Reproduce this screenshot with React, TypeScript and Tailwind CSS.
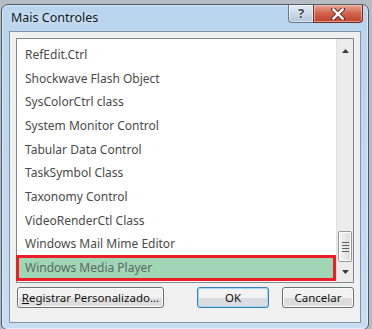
import React from 'react'

const ITEMS = [
  'RefEdit.Ctrl',
  'Shockwave Flash Object',
  'SysColorCtrl class',
  'System Monitor Control',
  'Tabular Data Control',
  'TaskSymbol Class',
  'Taxonomy Control',
  'VideoRenderCtl Class',
  'Windows Mail Mime Editor',
  'Windows Media Player',
]

const SELECTED = 'Windows Media Player'

function CaptionButtons() {
  return (
    <div className="flex h-[18px]">
      {/* help */}
      <div className="flex w-[25px] items-center justify-center rounded-bl-[4px] border border-t-0 border-r-0 border-[#6b7888] bg-gradient-to-b from-[#e3ebf4] via-[#cbd8e6] to-[#b4c5d8] shadow-[inset_0_0_0_1px_rgba(255,255,255,0.55)]">
        <span className="text-[13px] font-bold leading-none text-[#3d4550] [text-shadow:0_0_2px_#ffffff,0_0_1px_#ffffff]">
          ?
        </span>
      </div>
      {/* close */}
      <div className="flex w-[50px] items-center justify-center rounded-br-[4px] border border-t-0 border-[#6a2f27] bg-gradient-to-b from-[#e9a797] via-[#d0604a] to-[#c2432c] shadow-[inset_0_0_0_1px_rgba(255,210,200,0.55)]">
        <svg width="14" height="12" viewBox="0 0 14 12">
          <path d="M2 1 L12 11 M12 1 L2 11" stroke="#5a2a22" strokeWidth="4.2" strokeLinecap="round" />
          <path d="M2.3 1.3 L11.7 10.7 M11.7 1.3 L2.3 10.7" stroke="#ffffff" strokeWidth="2.4" strokeLinecap="round" />
        </svg>
      </div>
    </div>
  )
}

function Scrollbar() {
  return (
    <div className="flex w-[17px] flex-col border-l border-[#e2e2e2] bg-[#ececec]">
      <div className="flex h-[23px] items-center justify-center pt-[1px]">
        <svg width="7" height="4" viewBox="0 0 7 4">
          <path d="M0 4 L3.5 0 L7 4 Z" fill="#3a3a3a" />
        </svg>
      </div>
      <div className="flex-1" />
      <div className="mx-[1px] flex h-[31px] flex-col items-center justify-center gap-[2px] rounded-[2px] border border-[#979797] bg-gradient-to-r from-[#f4f4f4] to-[#dcdcdc] shadow-[inset_0_0_0_1px_#ffffff]">
        <div className="h-[1px] w-[7px] bg-[#5e5e5e]" />
        <div className="h-[1px] w-[7px] bg-[#5e5e5e]" />
        <div className="h-[1px] w-[7px] bg-[#5e5e5e]" />
        <div className="h-[1px] w-[7px] bg-[#5e5e5e]" />
      </div>
      <div className="flex h-[20px] items-center justify-center">
        <svg width="7" height="4" viewBox="0 0 7 4">
          <path d="M0 0 L7 0 L3.5 4 Z" fill="#3a3a3a" />
        </svg>
      </div>
    </div>
  )
}

function WinButton({
  children,
  width,
  focused,
}: {
  children: React.ReactNode
  width: string
  focused?: boolean
}) {
  return (
    <button
      type="button"
      className={
        'flex h-[21px] items-center justify-center rounded-[3px] border text-[11.5px] text-[#111111] ' +
        width +
        (focused
          ? ' border-[#3c7fb1] bg-gradient-to-b from-[#f2f2f2] from-50% to-[#d9dde2] to-50% shadow-[inset_0_0_0_1px_#9fdaf7]'
          : ' border-[#707070] bg-gradient-to-b from-[#f2f2f2] from-50% to-[#dddddd] to-50% shadow-[inset_0_0_0_1px_#fcfcfc]')
      }
    >
      {children}
    </button>
  )
}

export default function App() {
  return (
    <div
      className="h-[329px] w-[372px] overflow-hidden bg-[#b7bcc3] pl-[1px] pt-[4px]"
      style={{ fontFamily: '"Segoe UI", "Noto Sans", "Liberation Sans", sans-serif' }}
    >
      <div className="flex h-[326px] w-[368px] flex-col rounded-t-[7px] rounded-b-[6px] border border-[#4e5a67] bg-gradient-to-b from-[#b9d4ee] to-[#c6ddf3] shadow-[inset_0_0_0_1px_rgba(255,255,255,0.45)]">
        {/* title bar */}
        <div className="flex h-[26px] items-start pl-[9px] pr-[5px]">
          <span className="pt-[5px] text-[12.5px] leading-[16px] text-[#101820] [text-shadow:0_0_6px_rgba(255,255,255,0.9)]">
            Mais Controles
          </span>
          <div className="ml-auto">
            <CaptionButtons />
          </div>
        </div>

        {/* client area */}
        <div className="mb-[6px] ml-[7px] mr-[7px] flex flex-1 flex-col border border-[#8593a2] bg-[#f0f0f0] px-[6px] pt-[6px]">
          <div className="flex h-[245px] border border-[#828790] bg-white">
            <div className="flex flex-1 flex-col pt-[4px]">
              {ITEMS.map((item) => {
                const sel = item === SELECTED
                return (
                  <div
                    key={item}
                    className={
                      'relative flex h-[23.7px] shrink-0 items-center pl-[8px] text-[12px] ' +
                      (sel ? 'bg-[#9fd6b5] text-[#5d6862]' : 'text-[#4a4a4a]')
                    }
                  >
                    {sel && (
                      <span className="pointer-events-none absolute -bottom-[1px] -left-[1px] -top-[1px] right-0 border-[3px] border-[#ee1c25]" />
                    )}
                    <span className="relative">{item}</span>
                  </div>
                )
              })}
            </div>
            <Scrollbar />
          </div>

          <div className="mt-[4px] flex items-center pl-[1px]">
            <WinButton width="w-[147px]">
              <span>
                <span className="underline">R</span>egistrar Personalizado...
              </span>
            </WinButton>
            <div className="ml-auto flex gap-[13px]">
              <WinButton width="w-[72px]" focused>
                OK
              </WinButton>
              <WinButton width="w-[72px]">Cancelar</WinButton>
            </div>
          </div>
        </div>
      </div>
    </div>
  )
}
